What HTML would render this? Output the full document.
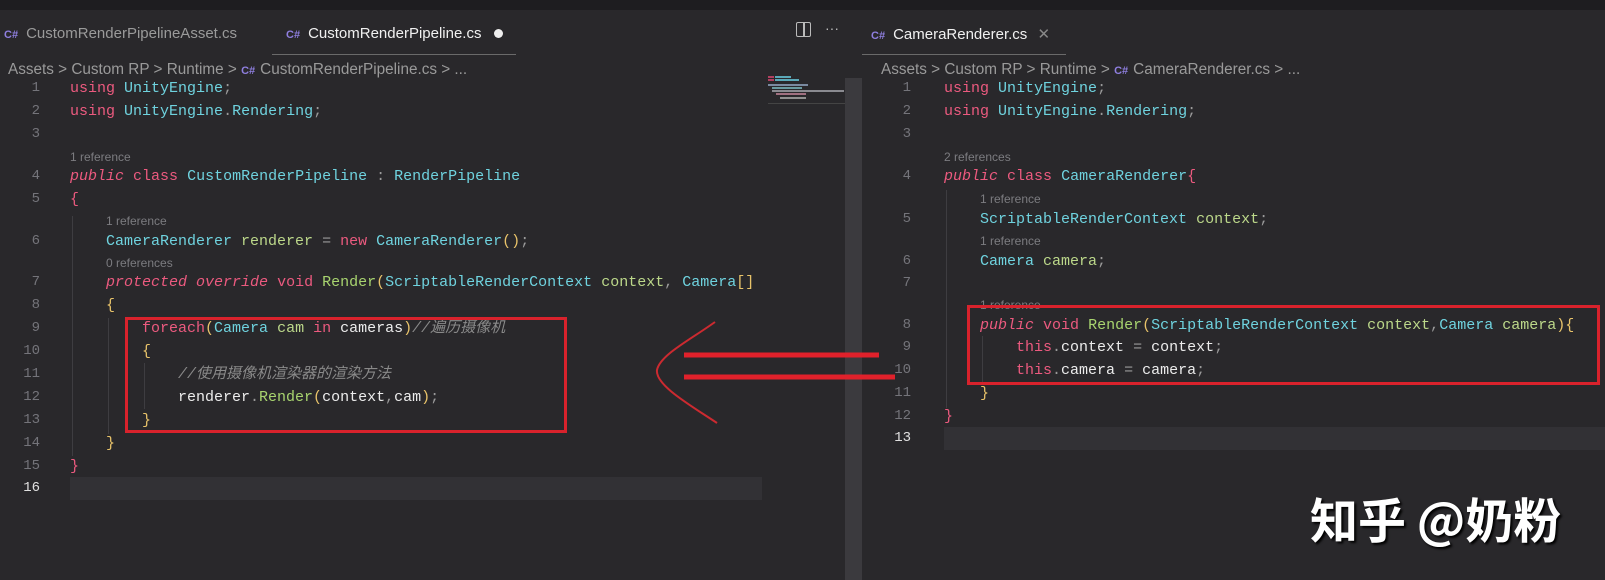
<!DOCTYPE html>
<html><head><meta charset="utf-8"><style>
*{margin:0;padding:0;box-sizing:border-box}
body{width:1605px;height:580px;background:#29282b;overflow:hidden;position:relative;font-family:"Liberation Sans","Noto Sans CJK SC",sans-serif}
.ab{position:absolute}
.ln{position:absolute;height:23px;line-height:23px;font-family:"Liberation Mono","Noto Sans CJK SC",monospace;font-size:15px;white-space:pre;color:#e4e4e4}
.num{position:absolute;width:40px;text-align:right;height:23px;line-height:23px;font-family:"Liberation Mono",monospace;font-size:14px;color:#74747a}
.lens{position:absolute;font-size:12px;color:#7c7c80;height:16px;line-height:16px;white-space:pre}
.k{color:#ec5a7f}.ki{color:#ec5a7f;font-style:italic}.t{color:#6fd3df}.v{color:#bcd88a}.f{color:#a8d46f}.b{color:#e8c36a}.p{color:#9a9a9a}.c{color:#8a8a8a;font-style:italic}.w{color:#ececec}
.tab{position:absolute;top:25px;font-size:15px;color:#9a9a9a;white-space:nowrap}
.cs{color:#8f7fe0;font-weight:bold;font-size:11px;margin-right:8px}
.guide{position:absolute;width:1px;background:#3e3d41}
.box{position:absolute;border:3px solid #d8222c}
</style></head><body>
<div class="ab" style="left:0;top:0;width:1605px;height:10px;background:#1e1d20"></div>

<!-- left tabs -->
<div class="tab" style="left:4px"><span class="cs">C#</span>CustomRenderPipelineAsset.cs</div>
<div class="tab" style="left:286px;color:#f0f0f0"><span class="cs">C#</span>CustomRenderPipeline.cs <span style="margin-left:8px;display:inline-block;width:9px;height:9px;border-radius:50%;background:#eee"></span></div>
<div class="ab" style="left:272px;top:54px;width:244px;height:1px;background:#6a6a6a"></div>
<div class="ab" style="left:796px;top:22px;width:15px;height:15px;border:1.5px solid #bbb;border-radius:2px"></div>
<div class="ab" style="left:803px;top:22px;width:1.5px;height:15px;background:#bbb"></div>
<div class="ab" style="left:825px;top:20px;color:#bbb;font-size:14px">···</div>
<div class="tab" style="left:8px;top:61px;font-size:15.3px;color:#9a9a9a">Assets &gt; Custom RP &gt; Runtime &gt; <span class="cs" style="margin-right:5px">C#</span>CustomRenderPipeline.cs &gt; ...</div>

<!-- right tabs -->
<div class="ab" style="left:844px;top:10px;width:18px;height:570px;background:#29282b"></div>
<div class="ab" style="left:845px;top:78px;width:17px;height:502px;background:#3b3a3e"></div>
<div class="tab" style="left:871px;color:#f0f0f0"><span class="cs">C#</span>CameraRenderer.cs <span style="color:#888;margin-left:6px">✕</span></div>
<div class="ab" style="left:862px;top:54px;width:204px;height:1px;background:#6a6a6a"></div>
<div class="tab" style="left:881px;top:61px;font-size:15.3px;color:#9a9a9a">Assets &gt; Custom RP &gt; Runtime &gt; <span class="cs" style="margin-right:5px">C#</span>CameraRenderer.cs &gt; ...</div>

<!-- minimap -->
<div class="ab" style="left:768px;top:76px;width:6px;height:2px;background:#b04060"></div>
<div class="ab" style="left:775px;top:76px;width:16px;height:2px;background:#5aa8b8"></div>
<div class="ab" style="left:768px;top:79px;width:6px;height:2px;background:#b04060"></div>
<div class="ab" style="left:775px;top:79px;width:24px;height:2px;background:#5aa8b8"></div>
<div class="ab" style="left:768px;top:84px;width:40px;height:2px;background:#7a8aa0"></div>
<div class="ab" style="left:772px;top:87px;width:30px;height:2px;background:#6a9aa0"></div>
<div class="ab" style="left:772px;top:90px;width:72px;height:2px;background:#8a8a90"></div>
<div class="ab" style="left:776px;top:93px;width:30px;height:2px;background:#a07080"></div>
<div class="ab" style="left:780px;top:97px;width:26px;height:2px;background:#909090"></div>
<div class="ab" style="left:768px;top:103px;width:77px;height:1px;background:#444"></div>

<!-- current line highlights -->
<div class="ab" style="left:70px;top:477px;width:692px;height:23px;background:#323135"></div>
<div class="ab" style="left:944px;top:427px;width:661px;height:23px;background:#323135"></div>

<!-- guides left -->
<div class="guide" style="left:72px;top:216px;height:240px"></div>
<div class="guide" style="left:108px;top:318px;height:116px"></div>
<div class="guide" style="left:144px;top:363px;height:46px"></div>
<!-- guides right -->
<div class="guide" style="left:946px;top:190px;height:218px"></div>
<div class="guide" style="left:982px;top:336px;height:46px"></div>

<!-- LEFT CODE -->
<div class="num" style="top:77px">1</div><div class="ln" style="left:70px;top:77px"><span class="k">using</span> <span class="t">UnityEngine</span><span class="p">;</span></div>
<div class="num" style="top:100px">2</div><div class="ln" style="left:70px;top:100px"><span class="k">using</span> <span class="t">UnityEngine</span><span class="p">.</span><span class="t">Rendering</span><span class="p">;</span></div>
<div class="num" style="top:123px">3</div>
<div class="lens" style="left:70px;top:149px">1 reference</div>
<div class="num" style="top:165px">4</div><div class="ln" style="left:70px;top:165px"><span class="ki">public</span> <span class="k">class</span> <span class="t">CustomRenderPipeline</span> <span class="p">:</span> <span class="t">RenderPipeline</span></div>
<div class="num" style="top:188px">5</div><div class="ln" style="left:70px;top:188px"><span class="k">{</span></div>
<div class="lens" style="left:106px;top:213px">1 reference</div>
<div class="num" style="top:230px">6</div><div class="ln" style="left:106px;top:230px"><span class="t">CameraRenderer</span> <span class="v">renderer</span> <span class="p">=</span> <span class="k">new</span> <span class="t">CameraRenderer</span><span class="b">()</span><span class="p">;</span></div>
<div class="lens" style="left:106px;top:255px">0 references</div>
<div class="num" style="top:271px">7</div><div class="ln" style="left:106px;top:271px;width:658px;overflow:hidden"><span class="ki">protected</span> <span class="ki">override</span> <span class="k">void</span> <span class="f">Render</span><span class="b">(</span><span class="t">ScriptableRenderContext</span> <span class="v">context</span><span class="p">,</span> <span class="t">Camera</span><span class="b">[]</span></div>
<div class="num" style="top:294px">8</div><div class="ln" style="left:106px;top:294px"><span class="b">{</span></div>
<div class="num" style="top:317px">9</div><div class="ln" style="left:142px;top:317px"><span class="k">foreach</span><span class="b">(</span><span class="t">Camera</span> <span class="v">cam</span> <span class="k">in</span> <span class="w">cameras</span><span class="b">)</span><span class="c">//遍历摄像机</span></div>
<div class="num" style="top:340px">10</div><div class="ln" style="left:142px;top:340px"><span class="b">{</span></div>
<div class="num" style="top:363px">11</div><div class="ln" style="left:178px;top:363px"><span class="c">//使用摄像机渲染器的渲染方法</span></div>
<div class="num" style="top:386px">12</div><div class="ln" style="left:178px;top:386px"><span class="w">renderer</span><span class="p">.</span><span class="f">Render</span><span class="b">(</span><span class="w">context</span><span class="p">,</span><span class="w">cam</span><span class="b">)</span><span class="p">;</span></div>
<div class="num" style="top:409px">13</div><div class="ln" style="left:142px;top:409px"><span class="b">}</span></div>
<div class="num" style="top:432px">14</div><div class="ln" style="left:106px;top:432px"><span class="b">}</span></div>
<div class="num" style="top:455px">15</div><div class="ln" style="left:70px;top:455px"><span class="k">}</span></div>
<div class="num" style="top:477px;color:#e0e0e0">16</div>

<!-- RIGHT CODE -->
<div class="num" style="left:871px;top:77px">1</div><div class="ln" style="left:944px;top:77px"><span class="k">using</span> <span class="t">UnityEngine</span><span class="p">;</span></div>
<div class="num" style="left:871px;top:100px">2</div><div class="ln" style="left:944px;top:100px"><span class="k">using</span> <span class="t">UnityEngine</span><span class="p">.</span><span class="t">Rendering</span><span class="p">;</span></div>
<div class="num" style="left:871px;top:123px">3</div>
<div class="lens" style="left:944px;top:149px">2 references</div>
<div class="num" style="left:871px;top:165px">4</div><div class="ln" style="left:944px;top:165px"><span class="ki">public</span> <span class="k">class</span> <span class="t">CameraRenderer</span><span class="k">{</span></div>
<div class="lens" style="left:980px;top:191px">1 reference</div>
<div class="num" style="left:871px;top:208px">5</div><div class="ln" style="left:980px;top:208px"><span class="t">ScriptableRenderContext</span> <span class="v">context</span><span class="p">;</span></div>
<div class="lens" style="left:980px;top:233px">1 reference</div>
<div class="num" style="left:871px;top:250px">6</div><div class="ln" style="left:980px;top:250px"><span class="t">Camera</span> <span class="v">camera</span><span class="p">;</span></div>
<div class="num" style="left:871px;top:272px">7</div>
<div class="lens" style="left:980px;top:297px">1 reference</div>
<div class="num" style="left:871px;top:314px">8</div><div class="ln" style="left:980px;top:314px"><span class="ki">public</span> <span class="k">void</span> <span class="f">Render</span><span class="b">(</span><span class="t">ScriptableRenderContext</span> <span class="v">context</span><span class="p">,</span><span class="t">Camera</span> <span class="v">camera</span><span class="b">){</span></div>
<div class="num" style="left:871px;top:336px">9</div><div class="ln" style="left:1016px;top:336px"><span class="k">this</span><span class="p">.</span><span class="w">context</span> <span class="p">=</span> <span class="w">context</span><span class="p">;</span></div>
<div class="num" style="left:871px;top:359px">10</div><div class="ln" style="left:1016px;top:359px"><span class="k">this</span><span class="p">.</span><span class="w">camera</span> <span class="p">=</span> <span class="w">camera</span><span class="p">;</span></div>
<div class="num" style="left:871px;top:382px">11</div><div class="ln" style="left:980px;top:382px"><span class="b">}</span></div>
<div class="num" style="left:871px;top:405px">12</div><div class="ln" style="left:944px;top:405px"><span class="k">}</span></div>
<div class="num" style="left:871px;top:427px;color:#e0e0e0">13</div>

<!-- annotations -->
<div class="box" style="left:125px;top:317px;width:442px;height:116px"></div>
<div class="box" style="left:967px;top:305px;width:633px;height:80px"></div>
<svg class="ab" style="left:0;top:0" width="1605" height="580">
<line x1="684" y1="355" x2="879" y2="355" stroke="#e0212b" stroke-width="5"/>
<line x1="684" y1="377" x2="895" y2="377" stroke="#e0212b" stroke-width="5"/>
<path d="M715,322 C690,340 660,355 657,370 C655,385 690,405 717,423" fill="none" stroke="#cc2a30" stroke-width="2"/>
</svg>

<div class="ab" style="left:1310px;top:482px;font-size:48px;color:#fff;font-family:'Noto Sans CJK SC',sans-serif;font-weight:bold;text-shadow:2px 2px 2px #000;white-space:nowrap">知乎 @奶粉</div>
</body></html>
